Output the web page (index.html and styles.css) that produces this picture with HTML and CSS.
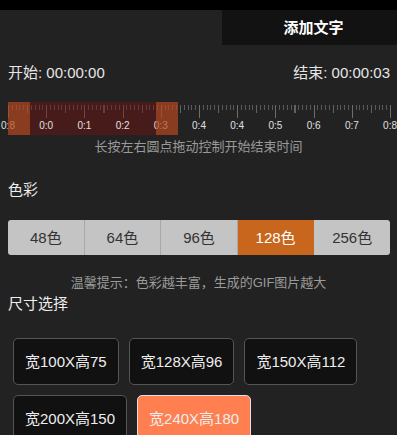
FILE: index.html
```html
<!DOCTYPE html>
<html lang="zh-CN">
  <head>
    <meta charset="UTF-8" />
    <meta name="viewport" content="width=device-width, initial-scale=1.0" />
    <title>GIF</title>
    <link rel="stylesheet" href="styles.css">
  </head>
  <body>
    <div class="statusbar"></div>
    <div class="topbar">
      <div class="add-text">添加文字</div>
    </div>

    <div class="times">
      <span>开始: 00:00:00</span>
      <span>结束: 00:00:03</span>
    </div>

    <div class="timeline">
      <div class="ticks"></div>
      <div class="range"></div>
      <div class="labels">
        <span>0:8</span>
        <span>0:0</span>
        <span>0:1</span>
        <span>0:2</span>
        <span>0:3</span>
        <span>0:4</span>
        <span>0:4</span>
        <span>0:5</span>
        <span>0:6</span>
        <span>0:7</span>
        <span>0:8</span>
      </div>
      <div class="handle handle-start"></div>
      <div class="handle handle-end"></div>
    </div>
    <p class="hint">长按左右圆点拖动控制开始结束时间</p>

    <h3 class="section-title color-title">色彩</h3>
    <div class="segments">
      <div class="segment">48色</div>
      <div class="segment">64色</div>
      <div class="segment">96色</div>
      <div class="segment active">128色</div>
      <div class="segment">256色</div>
    </div>
    <p class="hint tip">温馨提示：色彩越丰富，生成的GIF图片越大</p>

    <h3 class="section-title size-title">尺寸选择</h3>
    <div class="sizes">
      <div class="size-btn">宽100X高75</div>
      <div class="size-btn">宽128X高96</div>
      <div class="size-btn">宽150X高112</div>
      <div class="size-btn">宽200X高150</div>
      <div class="size-btn active">宽240X高180</div>
    </div>
  </body>
</html>
```

FILE: styles.css
```css
body {
  margin: 0;
  background: #222222;
  color: #e6e6e6;
  font-family: "Liberation Sans", "Noto Sans CJK SC", sans-serif;
  font-size: 15px;
  overflow: hidden;
}
.statusbar {
  height: 10px;
  background: #000;
}
.topbar {
  display: flex;
  justify-content: flex-end;
}
.add-text {
  width: 167px;
  height: 35px;
  padding-left: 8px;
  line-height: 35px;
  text-align: center;
  background: #121212;
  color: #fff;
  font-weight: bold;
}
.times {
  display: flex;
  justify-content: space-between;
  margin: 18px 7px 0 8px;
  line-height: 20px;
}
.timeline {
  position: relative;
  height: 33px;
  margin: 19px 7px 0 8px;
}
.ticks {
  position: absolute;
  top: 3px;
  left: 0;
  width: 383px;
  height: 16px;
  background-image:
    repeating-linear-gradient(to right, #6e6e6e 0 1px, transparent 1px 38.2px),
    repeating-linear-gradient(to right, #626262 0 1px, transparent 1px 19.1px),
    repeating-linear-gradient(to right, #5a5a5a 0 1px, transparent 1px 3.82px);
  background-size: 100% 13px, 100% 8px, 100% 5px;
  background-repeat: no-repeat;
}
.range {
  position: absolute;
  top: 0;
  left: 22px;
  width: 126px;
  height: 33px;
  background: rgba(120, 20, 20, 0.45);
}
.labels {
  position: absolute;
  top: 18px;
  left: -19.1px;
  width: 420.2px;
  display: flex;
  font-size: 10px;
  line-height: 12px;
  color: #e0e0e0;
}
.labels span {
  flex: 1;
  text-align: center;
}
.handle {
  position: absolute;
  top: 0;
  width: 22px;
  height: 33px;
  background: rgba(178, 70, 30, 0.72);
}
.handle-start {
  left: 0;
}
.handle-end {
  left: 148px;
}
.hint {
  margin: 3px 0 0;
  text-align: center;
  font-size: 13px;
  line-height: 18px;
  color: #9a9a9a;
}
.section-title {
  margin: 0 8px;
  font-size: 15px;
  font-weight: normal;
  line-height: 20px;
  color: #eee;
}
.color-title {
  margin-top: 24px;
}
.segments {
  display: flex;
  margin: 20px 7px 0 8px;
  height: 35px;
  background: #c4c4c4;
  border-radius: 3px;
  overflow: hidden;
}
.segment {
  flex: 1;
  line-height: 35px;
  text-align: center;
  color: #333;
  border-right: 1px solid #a9a9a9;
}
.segment:last-child {
  border-right: none;
}
.segment.active {
  background: #c8661e;
  color: #fff;
  border-right-color: #c8661e;
}
.tip {
  margin-top: 19px;
}
.size-title {
  margin-top: 2px;
}
.sizes {
  display: flex;
  flex-wrap: wrap;
  gap: 10px;
  margin: 24px 13px 0;
}
.size-btn {
  padding: 12px 11px;
  line-height: 21px;
  background: #111;
  border: 1px solid #555;
  border-radius: 5px;
  color: #eee;
}
.size-btn.active {
  background: #ff7f50;
  border-color: #e0e0e0;
}
```
